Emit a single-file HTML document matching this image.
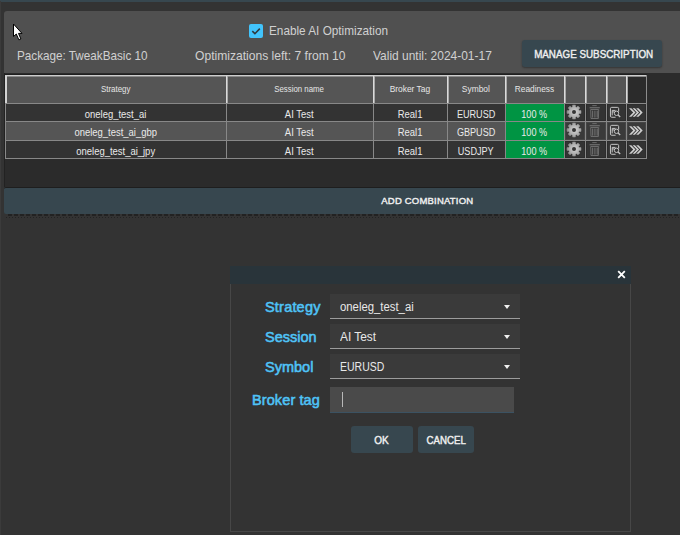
<!DOCTYPE html>
<html><head><meta charset="utf-8">
<style>
*{box-sizing:border-box;margin:0;padding:0}
html,body{width:680px;height:535px;overflow:hidden;background:#333333;font-family:"Liberation Sans",sans-serif;position:relative}
.a{position:absolute}
.t{white-space:nowrap;position:absolute}
#topline{left:0;top:0;width:680px;height:1.5px;background:#37474f}
#leftedge{left:0;top:1px;width:1px;height:534px;background:#3b3b3b}
#panel{left:4px;top:11px;width:676px;height:62px;background:#505050;border-radius:3px 0 0 0}
.ptxt{color:#d0d0d0;font-size:13px;line-height:12px}
#chk{left:248.5px;top:23.5px;width:14.5px;height:14.5px;background:#42c4fc;border-radius:2px}
#btnms{left:522px;top:40px;width:140px;height:27px;background:#37474f;border-radius:3px;box-shadow:0 1px 2px rgba(0,0,0,.35);color:#f0f0f0;font-size:11px;font-weight:normal;-webkit-text-stroke:0.4px #f0f0f0;text-align:center;line-height:28px}
.sx{display:inline-block;transform-origin:50% 50%}
#tarea{left:4px;top:73px;width:676px;height:114px;background:#2b2b2b}
.tb{position:absolute;background:#888}
.hdr{position:absolute;background:#555;border-left:1px solid #dcdcdc;border-top:1px solid #dcdcdc}
.htxt{position:absolute;color:#e6e6e6;font-size:9.5px;text-align:center;line-height:10px}
.rtxt{position:absolute;color:#eaeaea;font-size:10px;text-align:center;line-height:10px}
#addbar{left:4.3px;top:186.5px;width:676px;height:27.3px;background:#37474f;border-top:1px solid #1e1e1e;border-radius:2px 0 0 2px;color:#f0f0f0;font-size:9.5px;font-weight:normal;-webkit-text-stroke:0.4px #f0f0f0;letter-spacing:0.2px;text-align:center;line-height:26px;padding-left:170px}
#dash{left:6px;top:214px;width:674px;height:4px;background-image:repeating-linear-gradient(90deg,#222 0 4px,transparent 4px 6px),repeating-linear-gradient(90deg,#232323 0 1px,transparent 1px 3px);background-size:100% 2px,100% 1px;background-position:2px 0,0 3px;background-repeat:no-repeat}
#dlg{left:230px;top:266px;width:401px;height:266px;border:1px solid #474747;border-top:none;background:#333}
#dtitle{left:230px;top:266px;width:401px;height:18px;background:#29343a}
.lbl{position:absolute;color:#4fc3f7;font-size:14.5px;font-weight:normal;-webkit-text-stroke:0.55px #4fc3f7;line-height:14px;white-space:nowrap}
.combo{position:absolute;left:330px;width:190px;height:25px;background:#3a3a3a;border-bottom:1px solid #9c9c9c}
.ctxt{position:absolute;left:10px;top:6.5px;color:#e8e8e8;font-size:12px;line-height:12px;white-space:nowrap}
.arr{position:absolute;right:10px;top:11px;width:0;height:0;border-left:3.5px solid transparent;border-right:3.5px solid transparent;border-top:4px solid #f0f0f0}
#inp{left:329.5px;top:386.5px;width:184px;height:26px;background:#4a4a4a}
.dbtn{position:absolute;top:426px;height:27px;background:#37474f;border-radius:3px;color:#f0f0f0;font-size:10px;font-weight:normal;-webkit-text-stroke:0.4px #f0f0f0;text-align:center;line-height:29px;letter-spacing:-0.3px}
</style></head><body>
<div id="topline" class="a"></div>
<div id="leftedge" class="a"></div>
<div id="panel" class="a"></div>
<!-- cursor -->
<svg class="a" style="left:12px;top:23px" width="12" height="18" viewBox="0 0 12 18">
<path d="M1.5 1 L1.5 13.5 L4.3 11 L6.9 16.9 L8.9 16 L6.5 10.4 L10 10.4 Z" fill="#fff" stroke="#000" stroke-width="1" stroke-linejoin="miter"/>
</svg>
<div id="chk" class="a"><svg width="14" height="14" viewBox="0 0 14 14"><path d="M3.3 7.2 L5.9 9.7 L10.8 4.6" fill="none" stroke="#2e3a40" stroke-width="1.6"/></svg></div>
<div class="t ptxt" style="left:268.5px;top:25px;transform:scaleX(0.905);transform-origin:0 0">Enable AI Optimization</div>
<div class="t ptxt" style="left:17px;top:50px;transform:scaleX(0.9);transform-origin:0 0">Package: TweakBasic 10</div>
<div class="t ptxt" style="left:194.5px;top:50px;transform:scaleX(0.93);transform-origin:0 0">Optimizations left: 7 from 10</div>
<div class="t ptxt" style="left:372.5px;top:50px;transform:scaleX(0.92);transform-origin:0 0">Valid until: 2024-01-17</div>
<div id="btnms" class="a"><span class="sx" style="transform:scaleX(0.893);margin-left:3px">MANAGE SUBSCRIPTION</span></div>

<div id="tarea" class="a"></div>
<div class="a" style="left:4px;top:73px;width:1px;height:114px;background:#222"></div>
<!--TABLE-->
<div class="a" style="left:5px;top:75px;width:221px;height:28px;background:#555555"></div>
<div class="a" style="left:226px;top:75px;width:147px;height:28px;background:#555555"></div>
<div class="a" style="left:373px;top:75px;width:74px;height:28px;background:#555555"></div>
<div class="a" style="left:447px;top:75px;width:58px;height:28px;background:#555555"></div>
<div class="a" style="left:505px;top:75px;width:59px;height:28px;background:#555555"></div>
<div class="a" style="left:564px;top:75px;width:21px;height:28px;background:#555555"></div>
<div class="a" style="left:585px;top:75px;width:21px;height:28px;background:#555555"></div>
<div class="a" style="left:606px;top:75px;width:20px;height:28px;background:#555555"></div>
<div class="a" style="left:626px;top:75px;width:20px;height:28px;background:#2b2b2b"></div>
<div class="a" style="left:5px;top:74px;width:642px;height:1px;background:#1f1f1f"></div>
<div class="a" style="left:5px;top:75px;width:642px;height:1px;background:#cdcdcd"></div>
<div class="a" style="left:5px;top:76px;width:642px;height:1px;background:#8a8a8a"></div>
<div class="a" style="left:5px;top:76px;width:2px;height:27px;background:#d2d2d2"></div>
<div class="a" style="left:226px;top:76px;width:1px;height:27px;background:#dadada"></div>
<div class="a" style="left:227px;top:76px;width:1px;height:27px;background:#a8a8a8"></div>
<div class="a" style="left:373px;top:76px;width:1px;height:27px;background:#dadada"></div>
<div class="a" style="left:374px;top:76px;width:1px;height:27px;background:#a8a8a8"></div>
<div class="a" style="left:447px;top:76px;width:1px;height:27px;background:#dadada"></div>
<div class="a" style="left:448px;top:76px;width:1px;height:27px;background:#a8a8a8"></div>
<div class="a" style="left:505px;top:76px;width:1px;height:27px;background:#dadada"></div>
<div class="a" style="left:506px;top:76px;width:1px;height:27px;background:#a8a8a8"></div>
<div class="a" style="left:564px;top:76px;width:1px;height:27px;background:#dadada"></div>
<div class="a" style="left:565px;top:76px;width:1px;height:27px;background:#a8a8a8"></div>
<div class="a" style="left:585px;top:76px;width:1px;height:27px;background:#dadada"></div>
<div class="a" style="left:586px;top:76px;width:1px;height:27px;background:#a8a8a8"></div>
<div class="a" style="left:606px;top:76px;width:1px;height:27px;background:#dadada"></div>
<div class="a" style="left:607px;top:76px;width:1px;height:27px;background:#a8a8a8"></div>
<div class="a" style="left:626px;top:76px;width:1px;height:27px;background:#dadada"></div>
<div class="a" style="left:627px;top:76px;width:1px;height:27px;background:#a8a8a8"></div>
<div class="a" style="left:646px;top:75px;width:1px;height:84px;background:#8c8c8c"></div>
<div class="htxt" style="left:5px;top:84px;width:221px"><span class="sx" style="transform:scaleX(0.835)">Strategy</span></div>
<div class="htxt" style="left:226px;top:84px;width:147px"><span class="sx" style="transform:scaleX(0.825)">Session name</span></div>
<div class="htxt" style="left:373px;top:84px;width:74px"><span class="sx" style="transform:scaleX(0.885)">Broker Tag</span></div>
<div class="htxt" style="left:447px;top:84px;width:58px"><span class="sx" style="transform:scaleX(0.885)">Symbol</span></div>
<div class="htxt" style="left:505px;top:84px;width:59px"><span class="sx" style="transform:scaleX(0.875)">Readiness</span></div>
<div class="a" style="left:6px;top:104px;width:220px;height:17px;background:#333333"></div>
<div class="a" style="left:227px;top:104px;width:146px;height:17px;background:#333333"></div>
<div class="a" style="left:374px;top:104px;width:73px;height:17px;background:#333333"></div>
<div class="a" style="left:448px;top:104px;width:57px;height:17px;background:#333333"></div>
<div class="a" style="left:506px;top:104px;width:58px;height:17px;background:#009443"></div>
<div class="a" style="left:565px;top:104px;width:20px;height:17px;background:#333333;box-shadow:inset 0 0 0 1px #2c2c2c"></div>
<div class="a" style="left:586px;top:104px;width:20px;height:17px;background:#333333;box-shadow:inset 0 0 0 1px #2c2c2c"></div>
<div class="a" style="left:607px;top:104px;width:19px;height:17px;background:#333333;box-shadow:inset 0 0 0 1px #2c2c2c"></div>
<div class="a" style="left:627px;top:104px;width:19px;height:17px;background:#333333;box-shadow:inset 0 0 0 1px #2c2c2c"></div>
<div class="a" style="left:6px;top:122px;width:220px;height:18px;background:#555555"></div>
<div class="a" style="left:227px;top:122px;width:146px;height:18px;background:#555555"></div>
<div class="a" style="left:374px;top:122px;width:73px;height:18px;background:#555555"></div>
<div class="a" style="left:448px;top:122px;width:57px;height:18px;background:#555555"></div>
<div class="a" style="left:506px;top:122px;width:58px;height:18px;background:#009443"></div>
<div class="a" style="left:565px;top:122px;width:20px;height:18px;background:#3a3a3a;box-shadow:inset 0 0 0 1px #454545"></div>
<div class="a" style="left:586px;top:122px;width:20px;height:18px;background:#3a3a3a;box-shadow:inset 0 0 0 1px #454545"></div>
<div class="a" style="left:607px;top:122px;width:19px;height:18px;background:#3a3a3a;box-shadow:inset 0 0 0 1px #454545"></div>
<div class="a" style="left:627px;top:122px;width:19px;height:18px;background:#3a3a3a;box-shadow:inset 0 0 0 1px #454545"></div>
<div class="a" style="left:6px;top:141px;width:220px;height:17px;background:#333333"></div>
<div class="a" style="left:227px;top:141px;width:146px;height:17px;background:#333333"></div>
<div class="a" style="left:374px;top:141px;width:73px;height:17px;background:#333333"></div>
<div class="a" style="left:448px;top:141px;width:57px;height:17px;background:#333333"></div>
<div class="a" style="left:506px;top:141px;width:58px;height:17px;background:#009443"></div>
<div class="a" style="left:565px;top:141px;width:20px;height:17px;background:#333333;box-shadow:inset 0 0 0 1px #2c2c2c"></div>
<div class="a" style="left:586px;top:141px;width:20px;height:17px;background:#333333;box-shadow:inset 0 0 0 1px #2c2c2c"></div>
<div class="a" style="left:607px;top:141px;width:19px;height:17px;background:#333333;box-shadow:inset 0 0 0 1px #2c2c2c"></div>
<div class="a" style="left:627px;top:141px;width:19px;height:17px;background:#333333;box-shadow:inset 0 0 0 1px #2c2c2c"></div>
<div class="tb" style="left:5px;top:103px;width:642px;height:1px"></div>
<div class="tb" style="left:5px;top:121px;width:642px;height:1px"></div>
<div class="tb" style="left:5px;top:140px;width:642px;height:1px"></div>
<div class="tb" style="left:5px;top:158px;width:642px;height:1px"></div>
<div class="tb" style="left:5px;top:103px;width:1px;height:56px"></div>
<div class="tb" style="left:226px;top:103px;width:1px;height:56px"></div>
<div class="tb" style="left:373px;top:103px;width:1px;height:56px"></div>
<div class="tb" style="left:447px;top:103px;width:1px;height:56px"></div>
<div class="tb" style="left:505px;top:103px;width:1px;height:56px"></div>
<div class="tb" style="left:564px;top:103px;width:1px;height:56px"></div>
<div class="tb" style="left:585px;top:103px;width:1px;height:56px"></div>
<div class="tb" style="left:606px;top:103px;width:1px;height:56px"></div>
<div class="tb" style="left:626px;top:103px;width:1px;height:56px"></div>
<div class="tb" style="left:646px;top:103px;width:1px;height:56px"></div>
<div class="rtxt" style="left:5px;top:109.6px;width:221px"><span class="sx" style="transform:scaleX(0.945)">oneleg_test_ai</span></div>
<div class="rtxt" style="left:226px;top:109.6px;width:147px"><span class="sx" style="transform:scaleX(0.945)">AI Test</span></div>
<div class="rtxt" style="left:373px;top:109.6px;width:74px"><span class="sx" style="transform:scaleX(0.945)">Real1</span></div>
<div class="rtxt" style="left:447px;top:109.6px;width:58px"><span class="sx" style="transform:scaleX(0.91)">EURUSD</span></div>
<div class="rtxt" style="left:505px;top:109.6px;width:59px"><span class="sx" style="transform:scaleX(0.91)">100 %</span></div>
<div class="rtxt" style="left:5px;top:127.6px;width:221px"><span class="sx" style="transform:scaleX(0.945)">oneleg_test_ai_gbp</span></div>
<div class="rtxt" style="left:226px;top:127.6px;width:147px"><span class="sx" style="transform:scaleX(0.945)">AI Test</span></div>
<div class="rtxt" style="left:373px;top:127.6px;width:74px"><span class="sx" style="transform:scaleX(0.945)">Real1</span></div>
<div class="rtxt" style="left:447px;top:127.6px;width:58px"><span class="sx" style="transform:scaleX(0.91)">GBPUSD</span></div>
<div class="rtxt" style="left:505px;top:127.6px;width:59px"><span class="sx" style="transform:scaleX(0.91)">100 %</span></div>
<div class="rtxt" style="left:5px;top:146.6px;width:221px"><span class="sx" style="transform:scaleX(0.945)">oneleg_test_ai_jpy</span></div>
<div class="rtxt" style="left:226px;top:146.6px;width:147px"><span class="sx" style="transform:scaleX(0.945)">AI Test</span></div>
<div class="rtxt" style="left:373px;top:146.6px;width:74px"><span class="sx" style="transform:scaleX(0.945)">Real1</span></div>
<div class="rtxt" style="left:447px;top:146.6px;width:58px"><span class="sx" style="transform:scaleX(0.91)">USDJPY</span></div>
<div class="rtxt" style="left:505px;top:146.6px;width:59px"><span class="sx" style="transform:scaleX(0.91)">100 %</span></div>
<svg class="a" style="left:566px;top:103.6px" width="16" height="16" viewBox="0 0 16 16"><defs><radialGradient id="gg0" cx="0.55" cy="0.5" r="0.55"><stop offset="0.3" stop-color="#c4c4c4"/><stop offset="0.75" stop-color="#a8a8a8"/><stop offset="1" stop-color="#8a8a8a"/></radialGradient></defs><path fill="url(#gg0)" stroke="url(#gg0)" stroke-width="0.6" stroke-linejoin="round" d="M13.14 6.72 L14.96 6.61 L14.96 9.39 L13.14 9.28 L12.54 10.73 L13.90 11.94 L11.94 13.90 L10.73 12.54 L9.28 13.14 L9.39 14.96 L6.61 14.96 L6.72 13.14 L5.27 12.54 L4.06 13.90 L2.10 11.94 L3.46 10.73 L2.86 9.28 L1.04 9.39 L1.04 6.61 L2.86 6.72 L3.46 5.27 L2.10 4.06 L4.06 2.10 L5.27 3.46 L6.72 2.86 L6.61 1.04 L9.39 1.04 L9.28 2.86 L10.73 3.46 L11.94 2.10 L13.90 4.06 L12.54 5.27 Z"/><circle cx="8" cy="8" r="2" fill="#353535"/></svg>
<svg class="a" style="left:589px;top:104px" width="12" height="16" viewBox="0 0 12 16"><g fill="none" stroke="#6c6c6c"><path d="M3.3 1.6h4.4" stroke-width="1"/><path d="M0.6 3.7h10.2" stroke-width="1.3"/><path d="M1.7 5.5h8l-0.3 9h-7.4z" stroke-width="1"/></g><g fill="#6a6a6a"><rect x="3" y="6.6" width="1.2" height="7"/><rect x="5.3" y="6.6" width="1.2" height="7"/><rect x="7.6" y="6.6" width="1.2" height="7"/></g></svg>
<svg class="a" style="left:606px;top:103px" width="18" height="18" viewBox="0 0 18 18"><g fill="none" stroke="#c6c6c6" stroke-width="1"><path d="M12.65 8.6V5.6a1.25 1.25 0 0 0-1.25-1.25H5.7a1.25 1.25 0 0 0-1.25 1.25V13a1.25 1.25 0 0 0 1.25 1.25H9.6"/><path d="M6.2 7.4h3.3M6.2 7.4v5M6.2 8.9h2.3" stroke-width="1"/><circle cx="10.5" cy="10.3" r="2.2"/><path d="M12.1 12l2.1 2" stroke-width="1.3"/></g></svg>
<svg class="a" style="left:629px;top:108.2px" width="15" height="10" viewBox="0 0 15 10"><g fill="#d0d0d0"><path d="M0 0.3h2.3l4.2 4.2-4.2 4.2H0l4.2-4.2z"/><path d="M3.6 0.3h2.3l4.2 4.2-4.2 4.2H3.6l4.2-4.2z"/><path d="M7.2 0.3h2.3l4.2 4.2-4.2 4.2H7.2l4.2-4.2z"/></g></svg>
<svg class="a" style="left:566px;top:121.6px" width="16" height="16" viewBox="0 0 16 16"><defs><radialGradient id="gg1" cx="0.55" cy="0.5" r="0.55"><stop offset="0.3" stop-color="#c4c4c4"/><stop offset="0.75" stop-color="#a8a8a8"/><stop offset="1" stop-color="#8a8a8a"/></radialGradient></defs><path fill="url(#gg1)" stroke="url(#gg1)" stroke-width="0.6" stroke-linejoin="round" d="M13.14 6.72 L14.96 6.61 L14.96 9.39 L13.14 9.28 L12.54 10.73 L13.90 11.94 L11.94 13.90 L10.73 12.54 L9.28 13.14 L9.39 14.96 L6.61 14.96 L6.72 13.14 L5.27 12.54 L4.06 13.90 L2.10 11.94 L3.46 10.73 L2.86 9.28 L1.04 9.39 L1.04 6.61 L2.86 6.72 L3.46 5.27 L2.10 4.06 L4.06 2.10 L5.27 3.46 L6.72 2.86 L6.61 1.04 L9.39 1.04 L9.28 2.86 L10.73 3.46 L11.94 2.10 L13.90 4.06 L12.54 5.27 Z"/><circle cx="8" cy="8" r="2" fill="#353535"/></svg>
<svg class="a" style="left:589px;top:122px" width="12" height="16" viewBox="0 0 12 16"><g fill="none" stroke="#6c6c6c"><path d="M3.3 1.6h4.4" stroke-width="1"/><path d="M0.6 3.7h10.2" stroke-width="1.3"/><path d="M1.7 5.5h8l-0.3 9h-7.4z" stroke-width="1"/></g><g fill="#6a6a6a"><rect x="3" y="6.6" width="1.2" height="7"/><rect x="5.3" y="6.6" width="1.2" height="7"/><rect x="7.6" y="6.6" width="1.2" height="7"/></g></svg>
<svg class="a" style="left:606px;top:121px" width="18" height="18" viewBox="0 0 18 18"><g fill="none" stroke="#c6c6c6" stroke-width="1"><path d="M12.65 8.6V5.6a1.25 1.25 0 0 0-1.25-1.25H5.7a1.25 1.25 0 0 0-1.25 1.25V13a1.25 1.25 0 0 0 1.25 1.25H9.6"/><path d="M6.2 7.4h3.3M6.2 7.4v5M6.2 8.9h2.3" stroke-width="1"/><circle cx="10.5" cy="10.3" r="2.2"/><path d="M12.1 12l2.1 2" stroke-width="1.3"/></g></svg>
<svg class="a" style="left:629px;top:126.2px" width="15" height="10" viewBox="0 0 15 10"><g fill="#d0d0d0"><path d="M0 0.3h2.3l4.2 4.2-4.2 4.2H0l4.2-4.2z"/><path d="M3.6 0.3h2.3l4.2 4.2-4.2 4.2H3.6l4.2-4.2z"/><path d="M7.2 0.3h2.3l4.2 4.2-4.2 4.2H7.2l4.2-4.2z"/></g></svg>
<svg class="a" style="left:566px;top:140.6px" width="16" height="16" viewBox="0 0 16 16"><defs><radialGradient id="gg2" cx="0.55" cy="0.5" r="0.55"><stop offset="0.3" stop-color="#c4c4c4"/><stop offset="0.75" stop-color="#a8a8a8"/><stop offset="1" stop-color="#8a8a8a"/></radialGradient></defs><path fill="url(#gg2)" stroke="url(#gg2)" stroke-width="0.6" stroke-linejoin="round" d="M13.14 6.72 L14.96 6.61 L14.96 9.39 L13.14 9.28 L12.54 10.73 L13.90 11.94 L11.94 13.90 L10.73 12.54 L9.28 13.14 L9.39 14.96 L6.61 14.96 L6.72 13.14 L5.27 12.54 L4.06 13.90 L2.10 11.94 L3.46 10.73 L2.86 9.28 L1.04 9.39 L1.04 6.61 L2.86 6.72 L3.46 5.27 L2.10 4.06 L4.06 2.10 L5.27 3.46 L6.72 2.86 L6.61 1.04 L9.39 1.04 L9.28 2.86 L10.73 3.46 L11.94 2.10 L13.90 4.06 L12.54 5.27 Z"/><circle cx="8" cy="8" r="2" fill="#353535"/></svg>
<svg class="a" style="left:589px;top:141px" width="12" height="16" viewBox="0 0 12 16"><g fill="none" stroke="#6c6c6c"><path d="M3.3 1.6h4.4" stroke-width="1"/><path d="M0.6 3.7h10.2" stroke-width="1.3"/><path d="M1.7 5.5h8l-0.3 9h-7.4z" stroke-width="1"/></g><g fill="#6a6a6a"><rect x="3" y="6.6" width="1.2" height="7"/><rect x="5.3" y="6.6" width="1.2" height="7"/><rect x="7.6" y="6.6" width="1.2" height="7"/></g></svg>
<svg class="a" style="left:606px;top:140px" width="18" height="18" viewBox="0 0 18 18"><g fill="none" stroke="#c6c6c6" stroke-width="1"><path d="M12.65 8.6V5.6a1.25 1.25 0 0 0-1.25-1.25H5.7a1.25 1.25 0 0 0-1.25 1.25V13a1.25 1.25 0 0 0 1.25 1.25H9.6"/><path d="M6.2 7.4h3.3M6.2 7.4v5M6.2 8.9h2.3" stroke-width="1"/><circle cx="10.5" cy="10.3" r="2.2"/><path d="M12.1 12l2.1 2" stroke-width="1.3"/></g></svg>
<svg class="a" style="left:629px;top:145.2px" width="15" height="10" viewBox="0 0 15 10"><g fill="#d0d0d0"><path d="M0 0.3h2.3l4.2 4.2-4.2 4.2H0l4.2-4.2z"/><path d="M3.6 0.3h2.3l4.2 4.2-4.2 4.2H3.6l4.2-4.2z"/><path d="M7.2 0.3h2.3l4.2 4.2-4.2 4.2H7.2l4.2-4.2z"/></g></svg>
<!--/TABLE-->

<div id="addbar" class="a">ADD COMBINATION</div>
<div id="dash" class="a"></div>

<div id="dlg" class="a"></div>
<div id="dtitle" class="a"></div>
<svg class="a" style="left:617px;top:270px" width="9" height="9" viewBox="0 0 9 9"><path d="M1.2 1.2 L7.8 7.8 M7.8 1.2 L1.2 7.8" stroke="#fff" stroke-width="1.8"/></svg>

<div class="lbl" style="left:265px;top:300px;letter-spacing:0.2px">Strategy</div>
<div class="lbl" style="left:265px;top:330px;letter-spacing:0px">Session</div>
<div class="lbl" style="left:265px;top:360px;letter-spacing:0px">Symbol</div>
<div class="lbl" style="left:252px;top:393px;letter-spacing:0.1px">Broker tag</div>

<div class="combo" style="top:294px"><div class="ctxt" style="transform:scaleX(0.944);transform-origin:0 0">oneleg_test_ai</div><div class="arr"></div></div>
<div class="combo" style="top:324px"><div class="ctxt" style="transform:scaleX(0.99);transform-origin:0 0">AI Test</div><div class="arr"></div></div>
<div class="combo" style="top:354px"><div class="ctxt" style="transform:scaleX(0.875);transform-origin:0 0">EURUSD</div><div class="arr"></div></div>
<div id="inp" class="a"><div class="a" style="left:12px;top:5px;width:1.3px;height:15px;background:#b8b8b8"></div><div class="a" style="left:0;top:25px;width:184px;height:1px;background:#3b5262"></div></div>

<div class="dbtn" style="left:350.5px;width:62px;letter-spacing:0">OK</div>
<div class="dbtn" style="left:418px;width:56px;letter-spacing:0"><span class="sx" style="transform:scaleX(0.97)">CANCEL</span></div>
</body></html>
